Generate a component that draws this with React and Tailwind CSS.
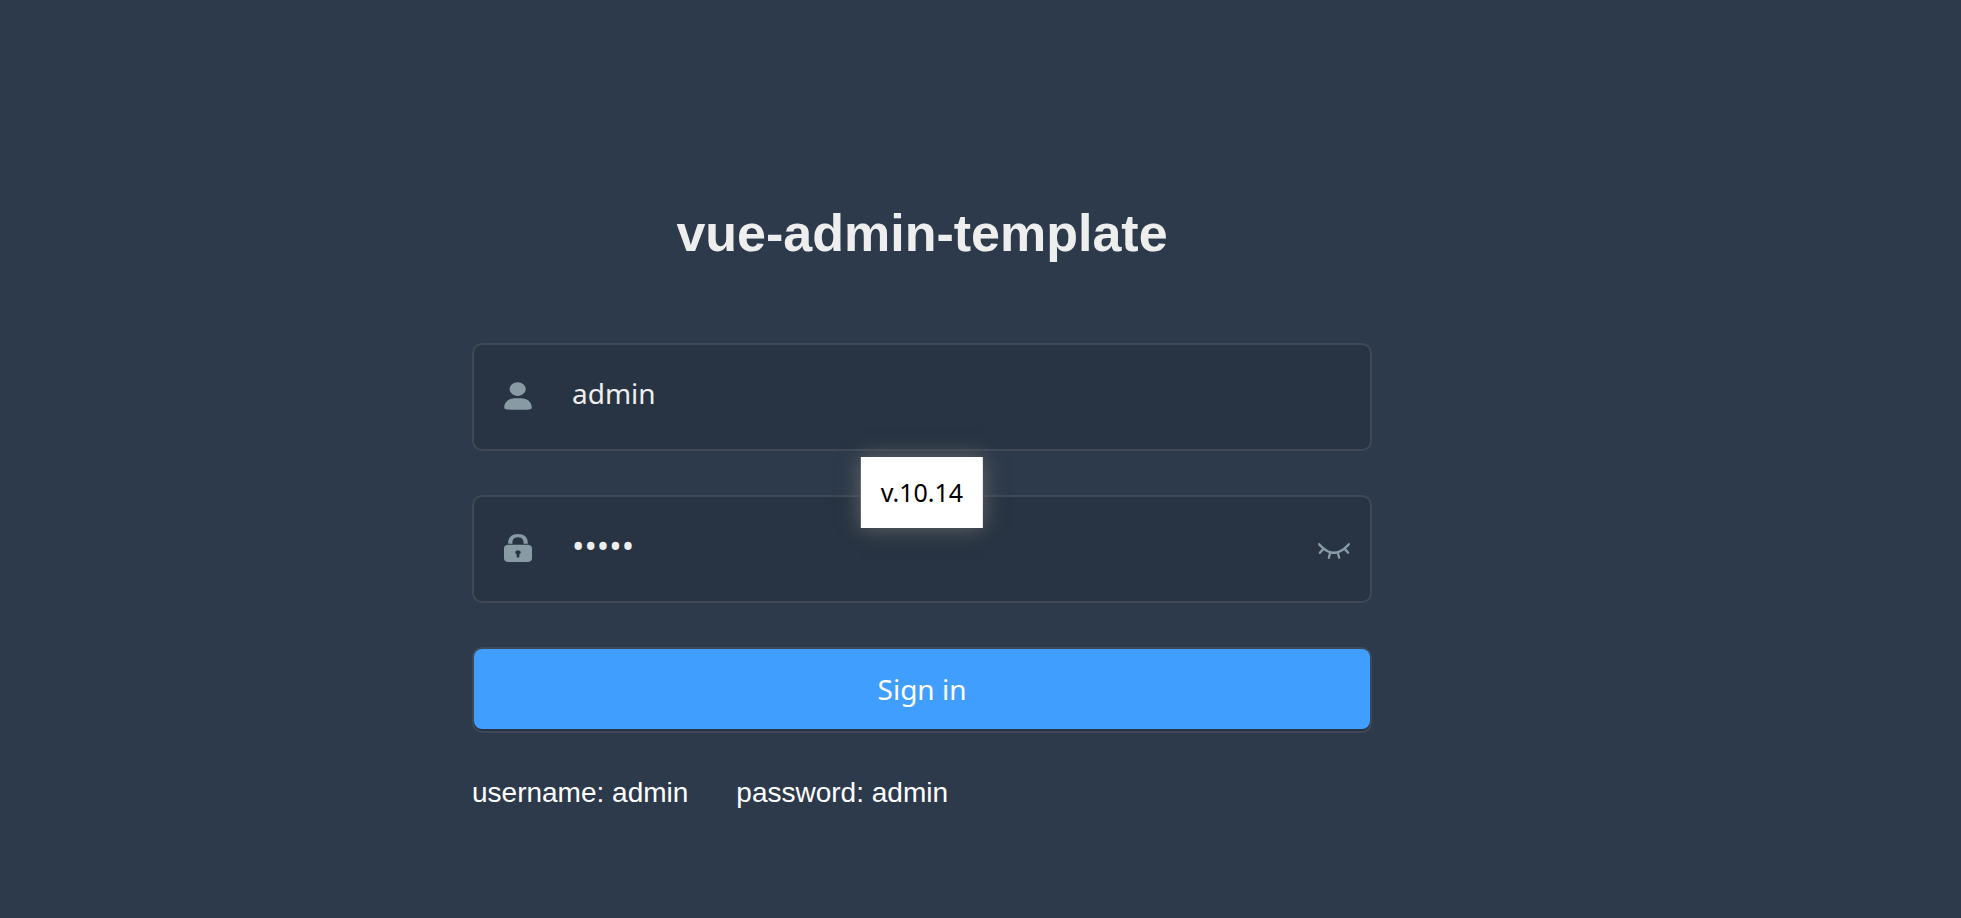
import { useState } from "react";
import clsx from "clsx";

function UserIcon() {
  return (
    <svg className="size-7" viewBox="0 0 130 130" fill="currentColor" aria-hidden="true">
      <path d="M63.444 64.996c20.633 0 37.359-14.308 37.359-31.953 0-17.649-16.726-31.952-37.359-31.952-20.631 0-37.36 14.303-37.36 31.952 0 17.645 16.729 31.953 37.36 31.953zM80.57 75.65H49.434c-26.652 0-48.26 18.477-48.26 41.27v2.664c0 9.316 21.608 9.325 48.26 9.325H80.57c26.649 0 48.256-.344 48.256-9.325v-2.663c0-22.794-21.605-41.271-48.256-41.271z" />
    </svg>
  );
}

function LockIcon() {
  return (
    <svg className="size-7" viewBox="0 0 128 128" fill="currentColor" aria-hidden="true">
      <path d="M108.8 44.322H89.6v-5.36c0-9.04-3.308-24.163-25.6-24.163-23.145 0-25.6 16.881-25.6 24.162v5.361H19.2v-5.36C19.2 15.281 36.798 0 64 0c27.202 0 44.8 15.281 44.8 38.961v5.361zm-32 39.356c0-5.44-5.763-9.832-12.8-9.832-7.037 0-12.8 4.392-12.8 9.832 0 3.682 2.567 6.808 6.407 8.477v11.205c0 2.718 2.875 4.962 6.4 4.962 3.524 0 6.4-2.244 6.4-4.962V92.155c3.833-1.669 6.393-4.795 6.393-8.477zM128 64v49.201c0 8.158-8.645 14.799-19.2 14.799H19.2C8.651 128 0 121.359 0 113.201V64c0-8.153 8.645-14.799 19.2-14.799h89.6c10.555 0 19.2 6.646 19.2 14.799z" />
    </svg>
  );
}

function ClosedEyeIcon() {
  return (
    <svg className="w-8 h-4" viewBox="0 0 128 64" fill="currentColor" aria-hidden="true">
      <path d="M127.072 7.994c1.37-2.208.914-5.152-.914-6.87-2.056-1.717-4.797-1.226-6.396.982-.229.245-25.586 32.382-55.74 32.382-29.24 0-55.74-32.382-55.968-32.627-1.6-1.963-4.57-2.208-6.397-.49C-.17 3.086-.399 6.275 1.2 8.238c.457.736 5.94 7.36 14.62 14.72L4.17 35.96c-1.828 1.963-1.6 5.152.228 6.87.457.98 1.6 1.471 2.742 1.471s2.284-.49 3.198-1.472l12.564-13.983c5.94 4.416 13.021 8.587 20.788 11.53l-4.797 17.418c-.685 2.699.686 5.397 3.198 6.133h1.37c2.057 0 3.884-1.472 4.341-3.68L52.6 42.83c3.655.736 7.538 1.227 11.422 1.227 3.883 0 7.767-.49 11.422-1.227l4.797 17.173c.457 2.208 2.513 3.68 4.34 3.68.457 0 .914 0 1.143-.246 2.513-.736 3.883-3.434 3.198-6.133l-4.797-17.172c7.767-2.944 14.848-7.114 20.788-11.53l12.336 13.738c.913.981 2.056 1.472 3.198 1.472s2.284-.49 3.198-1.472c1.828-1.963 1.828-4.906.228-6.87l-11.65-13.001c9.366-7.36 14.849-14.474 14.849-14.474z" />
    </svg>
  );
}

function Field({ id, label, icon, type, children, ...inputProps }) {
  return (
    <div className="relative flex items-center rounded-[10px] border-2 border-white/10 bg-black/10 pl-[30px] pr-5 text-[#889aa4]">
      <label htmlFor={id} aria-label={label} className="pb-0.5">
        {icon}
      </label>
      <input
        id={id}
        type={type}
        className={clsx(
          "h-[104px] min-w-0 flex-1 bg-transparent pl-10 pr-4 pb-2 text-[#eeeeee] outline-none",
          type === "password" ? "text-[33px]" : "text-[28px]"
        )}
        {...inputProps}
      />
      {children}
    </div>
  );
}

export default function App() {
  const [form, setForm] = useState({ username: "admin", password: "admin" });
  const [showPassword, setShowPassword] = useState(false);

  const handleChange = (e) => {
    setForm({ ...form, [e.target.name]: e.target.value });
  };

  return (
    <div className="min-h-screen bg-[#2d3a4b] pl-4 pr-[133px] font-['Noto_Sans',sans-serif]">
      <form
        className="mx-auto flex max-w-[900px] flex-col gap-11 pt-[203px]"
        onSubmit={(e) => e.preventDefault()}
      >
        <h1 className="mb-9 text-center font-['Liberation_Sans',sans-serif] text-[52px] leading-[60px] font-bold text-[#eeeeee]">
          vue-admin-template
        </h1>

        <Field
          id="username"
          name="username"
          label="Username"
          type="text"
          icon={<UserIcon />}
          value={form.username}
          onChange={handleChange}
        />

        <Field
          id="password"
          name="password"
          label="Password"
          type={showPassword ? "text" : "password"}
          icon={<LockIcon />}
          value={form.password}
          onChange={handleChange}
        >
          <button
            type="button"
            aria-label="Show password"
            className="cursor-pointer pt-1"
            onClick={() => setShowPassword(!showPassword)}
          >
            <ClosedEyeIcon />
          </button>

          {/* Version notice */}
          <div className="absolute -top-10 left-1/2 -translate-x-1/2 bg-white px-5 py-4 text-[25px] leading-[39px] text-black shadow-[0_0_20px_#666666]">
            v.10.14
          </div>
        </Field>

        <div className="rounded-[10px] border-2 border-white/10 bg-black/10 pb-0.5">
          <button
            type="submit"
            className="block h-20 w-full cursor-pointer rounded-lg bg-[#409eff] text-[28px] text-white"
          >
            Sign in
          </button>
        </div>

        <div className="flex gap-12 font-['Liberation_Sans',sans-serif] text-[28px] leading-8 text-white">
          <span>username: admin</span>
          <span>password: admin</span>
        </div>
      </form>
    </div>
  );
}
